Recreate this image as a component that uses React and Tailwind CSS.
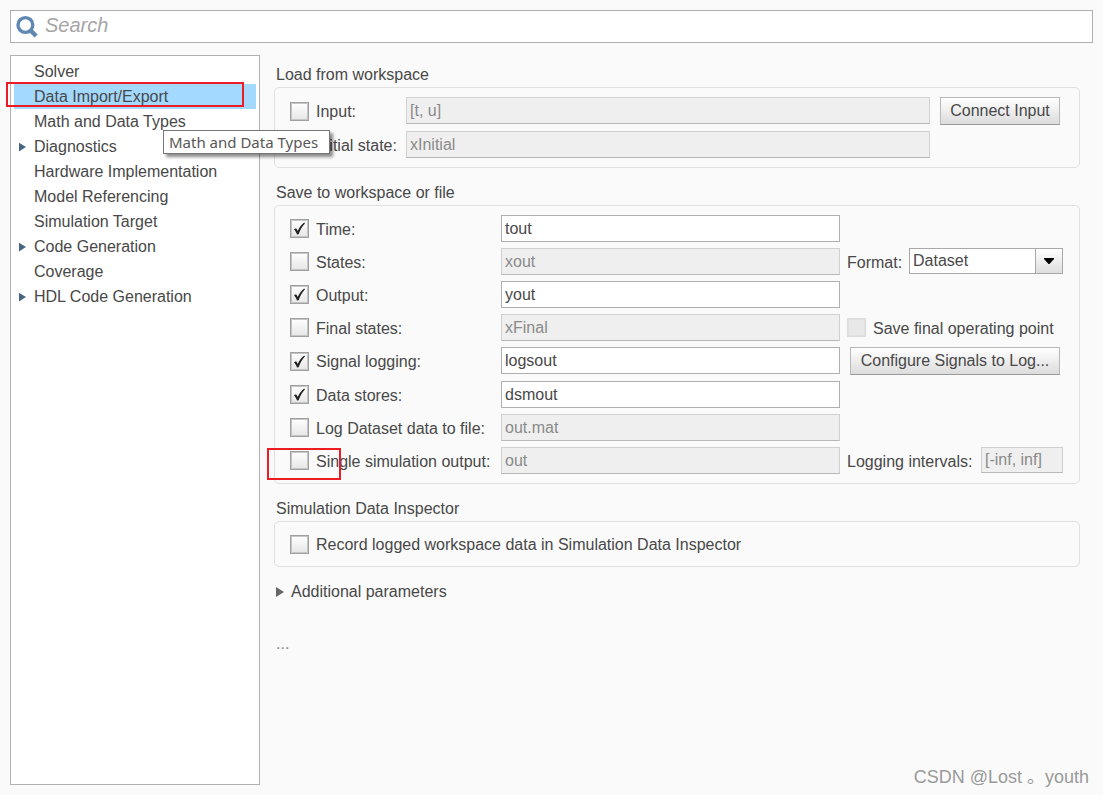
import { useState } from 'react';

const navItems = [
  { name: 'Solver' },
  { name: 'Data Import/Export' },
  { name: 'Math and Data Types' },
  { name: 'Diagnostics', children: true },
  { name: 'Hardware Implementation' },
  { name: 'Model Referencing' },
  { name: 'Simulation Target' },
  { name: 'Code Generation', children: true },
  { name: 'Coverage' },
  { name: 'HDL Code Generation', children: true }
];

const saveRows = [
  { id: 'time', label: 'Time:', value: 'tout', on: true },
  { id: 'states', label: 'States:', value: 'xout', on: false },
  { id: 'output', label: 'Output:', value: 'yout', on: true },
  { id: 'final', label: 'Final states:', value: 'xFinal', on: false },
  { id: 'logging', label: 'Signal logging:', value: 'logsout', on: true },
  { id: 'stores', label: 'Data stores:', value: 'dsmout', on: true },
  { id: 'file', label: 'Log Dataset data to file:', value: 'out.mat', on: false },
  { id: 'single', label: 'Single simulation output:', value: 'out', on: false }
];

const Arrow = ({ className }) => (
  <svg viewBox="0 0 8 10" className={className} fill="currentColor" aria-hidden="true">
    <path d="M0 0L8 5L0 10Z" />
  </svg>
);

const Checkbox = ({ label, checked = false, disabled = false, onChange = () => {} }) => (
  <label className="flex items-center gap-[7px] whitespace-nowrap">
    <span className="relative block size-[19px] shrink-0">
      <input
        type="checkbox"
        checked={checked}
        disabled={disabled}
        onChange={(e) => onChange(e.target.checked)}
        className="peer block size-[19px] appearance-none border border-[#a0a0a0] bg-linear-to-b from-white to-[#e6e6e6] shadow-[inset_0_0_0_1px_#c6c6c6] disabled:border-[#dcdcdc] disabled:from-[#e8e8e8] disabled:to-[#e8e8e8] disabled:shadow-[inset_0_0_0_1px_#e0e0e0]"
      />
      <svg
        viewBox="0 0 19 19"
        className="pointer-events-none absolute inset-0 hidden size-[19px] text-[#222222] peer-checked:block"
        fill="currentColor"
        aria-hidden="true"
      >
        <path d="M4 10.2L6 9.2C6.8 10 7.3 10.9 7.7 12C9.3 8.6 11.3 5.9 14.2 3.6L15 4.2C12.2 7.2 10.2 10.9 8.6 15.2L7 15.4C6.3 13.4 5.4 11.7 4 10.2Z" />
      </svg>
    </span>
    <span className="pt-0.5">{label}</span>
  </label>
);

const Field = ({ label, value, disabled = false, onChange = () => {}, className = 'h-[27px] w-full' }) => (
  <input
    type="text"
    aria-label={label}
    value={value}
    disabled={disabled}
    onChange={(e) => onChange(e.target.value)}
    className={`${className} min-w-0 self-start border border-[#b0b0b0] bg-white px-[3px] disabled:border-[#d0d0d0] disabled:border-b-[#b8b8b8] disabled:bg-[#efefef] disabled:text-[#8a8a8a]`}
  />
);

const PushButton = ({ children }) => (
  <button
    type="button"
    className="h-7 w-full border border-[#b8b8b8] border-b-[#999999] bg-linear-to-b from-white to-[#dcdcdc] leading-[26px] whitespace-nowrap"
  >
    {children}
  </button>
);

const Group = ({ title, children }) => (
  <section className="mb-[13px]">
    <h2 className="pl-0.5 leading-6">{title}</h2>
    <div className="rounded-[5px] border border-[#e0e0e0] px-[15px] py-[9px]">{children}</div>
  </section>
);

const App = () => {
  const [search, setSearch] = useState('');
  const [active, setActive] = useState('Data Import/Export');
  const [useInput, setUseInput] = useState(false);
  const [useInitial, setUseInitial] = useState(false);
  const [record, setRecord] = useState(false);
  const [rows, setRows] = useState(saveRows);

  const updateRow = (id, patch) => setRows(rows.map((r) => (r.id === id ? { ...r, ...patch } : r)));

  // Extra controls shown to the right of some rows
  const extras = {
    states: (
      <label className="flex w-full items-center justify-between">
        <span className="pt-0.5">Format:</span>
        <span className="relative block w-[154px] self-start">
          <select className="block h-[26px] w-full appearance-none border border-[#a8a8a8] bg-white pr-7 pl-[3px] leading-[22px]">
            <option>Dataset</option>
            <option>Array</option>
            <option>Structure</option>
            <option>Structure with time</option>
          </select>
          <span className="pointer-events-none absolute top-0 right-0 flex h-[26px] w-7 items-center justify-center border border-[#a8a8a8] bg-linear-to-b from-white to-[#dedede]">
            <svg viewBox="0 0 10 6" className="h-1.5 w-2.5" aria-hidden="true">
              <path d="M0 0H10V1L5.5 6H4.5L0 1Z" fill="#000" />
            </svg>
          </span>
        </span>
      </label>
    ),
    final: <Checkbox label="Save final operating point" disabled />,
    logging: (
      <div className="w-full px-[3px]">
        <PushButton>Configure Signals to Log...</PushButton>
      </div>
    ),
    single: (
      <label className="flex w-full items-center justify-between">
        <span className="pt-0.5">Logging intervals:</span>
        <Field label="Logging intervals" value="[-inf, inf]" disabled className="h-[26px] w-[82px]" />
      </label>
    )
  };

  return (
    <div className="relative flex min-h-screen flex-col gap-3 bg-[#fafafa] p-2.5 font-['Liberation_Sans',Arial,sans-serif] text-base text-[#484848]">
      <label className="flex h-[33px] items-center border border-[#b0b0b0] bg-white pl-1">
        <svg viewBox="0 0 24 24" className="size-6 shrink-0" fill="none" stroke="#5f87b3" aria-hidden="true">
          <circle cx="10.4" cy="10" r="7.4" strokeWidth="3.4" />
          <path d="M15.4 15.4L21.2 21" strokeWidth="4.4" />
        </svg>
        <input
          type="text"
          aria-label="Search"
          placeholder="Search"
          value={search}
          onChange={(e) => setSearch(e.target.value)}
          className="h-full min-w-0 flex-1 bg-transparent pb-0.5 pl-1.5 text-xl outline-none placeholder:text-[#a6a6a6] placeholder:italic"
        />
      </label>

      <div className="flex flex-1 gap-3.5">
        <nav className="w-[250px] shrink-0 border border-[#b0b0b0] bg-white p-[3px]">
          <ul>
            {navItems.map((item) => (
              <li key={item.name} className="relative">
                <button
                  type="button"
                  onClick={() => setActive(item.name)}
                  className={`flex h-[25px] w-full items-center text-left leading-[25px] ${active === item.name ? 'bg-[#a3d9ff]' : ''}`}
                >
                  <span className="flex w-5 pl-[5px] text-[#4a6483]">
                    {item.children && <Arrow className="h-2.5 w-[7px]" />}
                  </span>
                  {item.name}
                </button>
                {item.name === 'Data Import/Export' && (
                  <span className="pointer-events-none absolute -top-0.5 -left-2 h-[25px] w-[238px] border-2 border-[#ed1c24]"></span>
                )}
                {item.name === 'Math and Data Types' && (
                  <span
                    role="tooltip"
                    className="absolute top-[21px] left-[149px] z-10 h-6 w-[167px] border border-[#767676] bg-white px-[5px] font-['Noto_Sans',sans-serif] text-[15px] leading-[22px] whitespace-nowrap text-[#575757] shadow-[3px_3px_3px_rgba(0,0,0,0.45)]"
                  >
                    Math and Data Types
                  </span>
                )}
              </li>
            ))}
          </ul>
        </nav>

        <main className="min-w-0 flex-1 pt-2 pr-[13px]">
          <Group title="Load from workspace">
            <div className="grid grid-cols-[116px_1fr_134px] gap-y-1.5">
              <Checkbox label="Input:" checked={useInput} onChange={setUseInput} />
              <Field label="Input" value="[t, u]" disabled={!useInput} />
              <div className="pr-1 pl-2.5">
                <PushButton>Connect Input</PushButton>
              </div>
              <Checkbox label="Initial state:" checked={useInitial} onChange={setUseInitial} />
              <Field label="Initial state" value="xInitial" disabled={!useInitial} />
            </div>
          </Group>

          <Group title="Save to workspace or file">
            <div className="flex flex-col gap-1.5">
              {rows.map((row) => (
                <div key={row.id} className="relative grid grid-cols-[211px_1fr_224px]">
                  <Checkbox
                    label={row.label}
                    checked={row.on}
                    onChange={(on) => updateRow(row.id, { on })}
                  />
                  <Field
                    label={row.label}
                    value={row.value}
                    disabled={!row.on}
                    onChange={(value) => updateRow(row.id, { value })}
                  />
                  <div className="flex pr-px pl-[7px]">{extras[row.id]}</div>
                  {row.id === 'single' && (
                    <span className="pointer-events-none absolute top-px -left-[23px] h-8 w-[74px] border-2 border-[#ed1c24]"></span>
                  )}
                </div>
              ))}
            </div>
          </Group>

          <Group title="Simulation Data Inspector">
            <Checkbox
              label="Record logged workspace data in Simulation Data Inspector"
              checked={record}
              onChange={setRecord}
            />
          </Group>

          <button type="button" className="flex items-center gap-[7px] pl-0.5 leading-6">
            <Arrow className="h-2.5 w-2 text-[#666666]" />
            Additional parameters
          </button>
          <p className="mt-7 pl-0.5 leading-6 text-[#888888]">...</p>
        </main>
      </div>

      <span className="absolute right-3.5 bottom-1 font-['Liberation_Sans','Noto_Sans_CJK_SC',sans-serif] text-lg text-[#999999] [text-shadow:1px_1px_0_#ffffff]">
        CSDN @Lost 。youth
      </span>
    </div>
  );
};

export default App;
